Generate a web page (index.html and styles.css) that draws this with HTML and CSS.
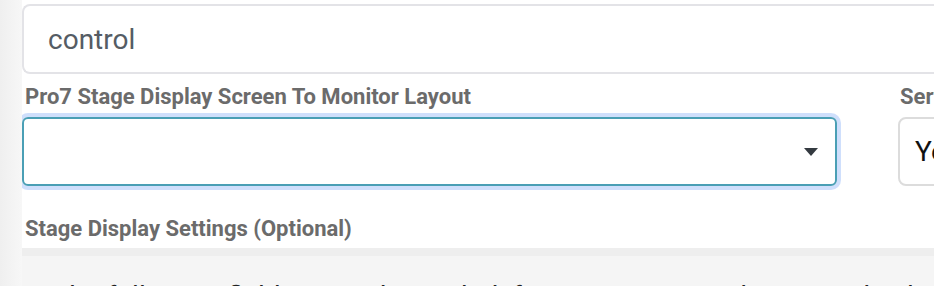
FILE: index.html
```html
<!DOCTYPE html>
<html>
<head>
<meta charset="utf-8">
<link rel="stylesheet" href="styles.css">
</head>
<body>
<div class="page">
  <div class="side"></div>
  <div class="main">
    <div class="text-input wide">control</div>
    <div class="row">
      <div class="col col-left">
        <div class="label">Pro7 Stage Display Screen To Monitor Layout</div>
        <div class="select">
          <svg class="caret" width="14" height="8" viewBox="0 0 14 8"><path d="M0 0 H14 L7 8 Z" fill="#343a40"/></svg>
        </div>
      </div>
      <div class="col col-right">
        <div class="label">Server</div>
        <div class="text-input dark">Yes</div>
      </div>
    </div>
    <div class="label section">Stage Display Settings (Optional)</div>
    <div class="panel">
      <p class="panel-text">the following fields are only needed if you want to use the stage display connection with a password</p>
    </div>
  </div>
</div>
</body>
</html>
```
FILE: styles.css
```css
html, body {
  margin: 0;
  padding: 0;
  background: #ffffff;
  overflow: hidden;
}
.page {
  display: flex;
  width: 934px;
  height: 286px;
  overflow: hidden;
  font-family: Roboto, "Liberation Sans", sans-serif;
}
.side {
  width: 22px;
  flex: none;
  background: linear-gradient(to right, #efefef, #f7f7f7);
}
.main {
  flex: 1;
  min-width: 0;
  padding-top: 4px;
  overflow: hidden;
}
.text-input {
  box-sizing: border-box;
  height: 70px;
  border: 2px solid #e3e3e7;
  border-radius: 8px;
  padding: 0 0 0 24px;
  display: flex;
  align-items: center;
  font-size: 28px;
  color: #555c64;
  white-space: nowrap;
  overflow: hidden;
}
.text-input.wide {
  width: 1000px;
  border-right: none;
  border-radius: 8px 0 0 8px;
}
.text-input.dark {
  color: #111;
  padding-left: 15px;
  height: 69px;
  border-color: #dcdcdc;
}
.row {
  display: flex;
  gap: 61px;
  margin-top: 11px;
}
.col-left {
  width: 815px;
  flex: none;
}
.col-right {
  width: 200px;
  flex: none;
}
.label {
  font-weight: 700;
  font-size: 22px;
  color: #6b6b6b;
  padding-left: 3px;
  height: 24px;
  line-height: 24px;
  margin-bottom: 8px;
  white-space: nowrap;
}
.col-right .label {
  padding-left: 2px;
}
.select {
  box-sizing: border-box;
  height: 69px;
  border: 2px solid #4a9fb5;
  border-radius: 6px;
  box-shadow: 0 0 0 4px #cfdffc;
  display: flex;
  align-items: center;
  justify-content: flex-end;
  padding-right: 17px;
}
.caret {
  display: block;
}
.section {
  margin-top: 31px;
  margin-bottom: 0;
}
.panel {
  margin-top: 7px;
  border-top: 8px solid #eeeeee;
  background: #f5f5f5;
  height: 80px;
  padding: 24px 0 0 38px;
  box-sizing: border-box;
}
.panel-text {
  margin: 0;
  font-size: 28px;
  color: #222;
  white-space: nowrap;
}
```
